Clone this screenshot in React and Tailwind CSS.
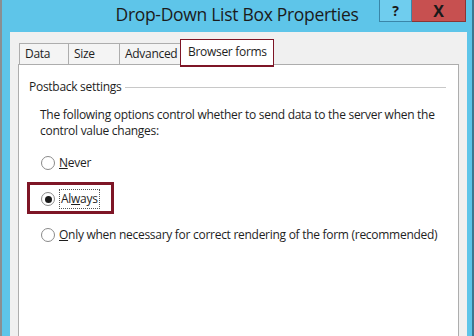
import React from 'react'

const font = { fontFamily: '"Open Sans", "Noto Sans", sans-serif' }

const Radio = ({ checked }) => (
  <span className="w-[14px] h-[14px] rounded-full border border-[#8a8a8a] bg-white flex items-center justify-center shrink-0">
    {checked && <span className="w-[7px] h-[7px] rounded-full bg-[#1a1a1a]"></span>}
  </span>
)

const App = () => {
  return (
    <div
      className="w-[474px] h-[336px] bg-[#5ec5e9] border-l-2 border-l-[#8a8f92] border-r-2 border-r-[#3b7890] flex flex-col overflow-hidden relative text-[#1e1e1e] whitespace-nowrap"
      style={font}
    >
      {/* title bar */}
      <div className="h-[32px] shrink-0 relative flex items-center justify-center">
        <div className="text-[17.5px] tracking-[-0.3px] text-[#1b1b1b] leading-none pb-[2px]">Drop-Down List Box Properties</div>
        <div className="absolute right-[6px] top-0 flex">
          <div className="w-[33px] h-[22px] bg-[#6fcdee] border border-[#3a86a8] border-t-0 flex items-center justify-center text-[14px] font-bold text-[#1a1a1a]">
            ?
          </div>
          <div className="w-[54px] h-[22px] bg-[#c75050] border-b border-r border-[#8a3535] flex items-center justify-center text-[16px] font-bold text-[#1a1a1a]">
            X
          </div>
        </div>
      </div>

      {/* client area */}
      <div className="flex-1 ml-[8px] mr-[5px] bg-[#f0f0f0] pl-[8px] pr-[8px] pt-[8px] flex flex-col">
        {/* tabs */}
        <div className="flex items-end h-[24px] text-[12px] tracking-[-0.3px] pl-[1px]">
          <div className="w-[50px] h-[21px] border border-b-0 border-[#adadad] bg-[#f4f4f4] pl-[5px] flex items-center">Data</div>
          <div className="w-[51px] h-[21px] border border-b-0 border-l-0 border-[#adadad] bg-[#f4f4f4] pl-[5px] flex items-center">Size</div>
          <div className="w-[61px] h-[21px] border border-b-0 border-l-0 border-[#adadad] bg-[#f4f4f4] pl-[5px] flex items-center overflow-hidden">Advanced</div>
          <div className="w-[92px] h-[25px] -mb-[1px] bg-white pl-[7px] flex items-start pt-[3px] relative z-10">Browser forms</div>
        </div>

        {/* panel */}
        <div className="flex-1 bg-white border border-[#adadad] border-b-0 pl-[10px] pr-[12px] pt-[13px] text-[12px] tracking-[-0.28px]">
          <div className="flex items-center gap-[3px]">
            <span>Postback settings</span>
            <span className="flex-1 h-px bg-[#c8c8c8]"></span>
          </div>
          <div className="pl-[11px] pt-[11px] leading-[16px]">
            The following options control whether to send data to the server when the
            <br />
            control value changes:
          </div>
          <div className="pl-[12px] pt-[16px] flex flex-col gap-[20px]">
            <div className="flex items-center gap-[4px] h-[16px]">
              <Radio />
              <span><u>N</u>ever</span>
            </div>
            <div className="flex items-center gap-[4px] h-[16px]">
              <Radio checked />
              <span className="border border-dotted border-[#555] px-[1px]">Al<u>w</u>ays</span>
            </div>
            <div className="flex items-center gap-[4px] h-[16px]">
              <Radio />
              <span><u>O</u>nly when necessary for correct rendering of the form (recommended)</span>
            </div>
          </div>
        </div>
      </div>

      {/* annotation boxes */}
      <div className="absolute left-[178px] top-[39px] w-[94px] h-[28px] border-[3px] border-[#7e1526]"></div>
      <div className="absolute left-[25px] top-[182px] w-[87px] h-[32px] border-[3px] border-[#7e1526]"></div>
    </div>
  )
}

export default App
